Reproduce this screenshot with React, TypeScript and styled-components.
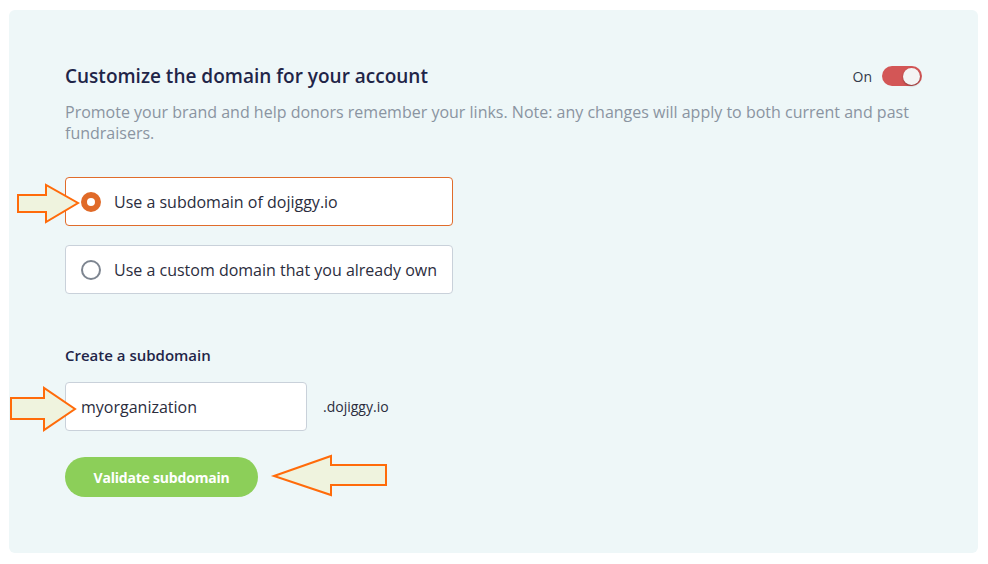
import React from "react";
import styled, { createGlobalStyle } from "styled-components";

const Global = createGlobalStyle`
  html, body { margin: 0; padding: 0; background: #ffffff; }
  body { font-family: "Open Sans", "Noto Sans", sans-serif; }
  * { box-sizing: border-box; }
`;

const Page = styled.div`
  padding: 10px 10px 11px 9px;
  width: 988px;
  height: 564px;
`;

const Panel = styled.section`
  position: relative;
  height: 543px;
  background: #eef7f8;
  border-radius: 6px;
  padding: 53px 56px 0 56px;
`;

const Header = styled.div`
  display: flex;
  align-items: center;
  justify-content: space-between;
  height: 26px;
`;

const Title = styled.h2`
  margin: 0;
  font-size: 19px;
  font-weight: 600;
  color: #1f2548;
  line-height: 26px;
`;

const ToggleWrap = styled.div`
  display: flex;
  align-items: center;
  gap: 10px;
  font-size: 14px;
  color: #333a4a;
`;

const Track = styled.div<{ $on: boolean }>`
  width: 40px;
  height: 20px;
  border-radius: 10px;
  background: ${(p) => (p.$on ? "#d35656" : "#c0c6cc")};
  display: flex;
  align-items: center;
  justify-content: ${(p) => (p.$on ? "flex-end" : "flex-start")};
  padding: 0 2px;
`;

const Knob = styled.div`
  width: 17px;
  height: 17px;
  border-radius: 50%;
  background: #f4f4f4;
  box-shadow: 0 1px 2px rgba(0, 0, 0, 0.35);
`;

const Description = styled.p`
  margin: 13px 0 0 0;
  font-size: 16px;
  line-height: 21px;
  color: #8a94a1;
`;

const Options = styled.div`
  margin-top: 33px;
  display: flex;
  flex-direction: column;
  gap: 19px;
  width: 388px;
`;

const Option = styled.label<{ $selected: boolean }>`
  display: flex;
  align-items: center;
  gap: 13px;
  height: 49px;
  padding: 0 8px 0 15px;
  background: #ffffff;
  border: 1px solid ${(p) => (p.$selected ? "#e06c2b" : "#c9d1da")};
  border-radius: 4px;
  font-size: 16px;
  color: #2b2d3d;
  white-space: nowrap;
  cursor: pointer;
`;

const Radio = styled.span<{ $selected: boolean }>`
  width: 20px;
  height: 20px;
  border-radius: 50%;
  flex: none;
  background: #ffffff;
  border: ${(p) => (p.$selected ? "6px solid #e06a28" : "2px solid #7d8590")};
`;

const Label = styled.div`
  margin-top: 51px;
  font-size: 15px;
  font-weight: 600;
  line-height: 20px;
  color: #1f2548;
`;

const InputRow = styled.div`
  margin-top: 17px;
  display: flex;
  align-items: center;
  gap: 16px;
`;

const Input = styled.div`
  width: 242px;
  height: 49px;
  background: #ffffff;
  border: 1px solid #c9d1da;
  border-radius: 4px;
  display: flex;
  align-items: center;
  padding: 0 15px;
  font-size: 16px;
  color: #2b2d3d;
`;

const Suffix = styled.span`
  font-size: 14px;
  color: #2b2d3d;
`;

const Button = styled.button`
  margin-top: 26px;
  width: 193px;
  height: 40px;
  border: none;
  border-radius: 20px;
  background: #8ccf59;
  color: #ffffff;
  font-family: "Open Sans", sans-serif;
  font-size: 14px;
  font-weight: 700;
  letter-spacing: -0.2px;
  cursor: pointer;
`;

const ArrowSvg = styled.svg`
  position: absolute;
  overflow: visible;
  pointer-events: none;
`;

type ArrowProps = { points: string; left: number; top: number; w: number; h: number };

const Arrow: React.FC<ArrowProps> = ({ points, left, top, w, h }) => (
  <ArrowSvg width={w} height={h} viewBox={`0 0 ${w} ${h}`} style={{ left, top }}>
    <polygon points={points} fill="#eff3de" stroke="#ff6b0a" strokeWidth={2} strokeLinejoin="miter" />
  </ArrowSvg>
);

export default function App() {
  return (
    <Page>
      <Global />
      <Panel>
        <Header>
          <Title>Customize the domain for your account</Title>
          <ToggleWrap>
            On
            <Track $on>
              <Knob />
            </Track>
          </ToggleWrap>
        </Header>
        <Description>
          Promote your brand and help donors remember your links. Note: any changes will apply to both current and past
          fundraisers.
        </Description>
        <Options>
          <Option $selected>
            <Radio $selected />
            Use a subdomain of dojiggy.io
          </Option>
          <Option $selected={false}>
            <Radio $selected={false} />
            Use a custom domain that you already own
          </Option>
        </Options>
        <Label>Create a subdomain</Label>
        <InputRow>
          <Input>myorganization</Input>
          <Suffix>.dojiggy.io</Suffix>
        </InputRow>
        <Button>Validate subdomain</Button>

        <Arrow left={17 - 9} top={184 - 10} w={62} h={40} points="1,11 29,11 29,1 61,19 29,38 29,28 1,28" />
        <Arrow left={10 - 9} top={387 - 10} w={66} h={44} points="1,11 34,11 34,1 65,22 34,43 34,32 1,32" />
        <Arrow left={273 - 9} top={455 - 10} w={115} h={42} points="1,21 58,1 58,10 113,10 113,30 58,30 58,40" />
      </Panel>
    </Page>
  );
}
